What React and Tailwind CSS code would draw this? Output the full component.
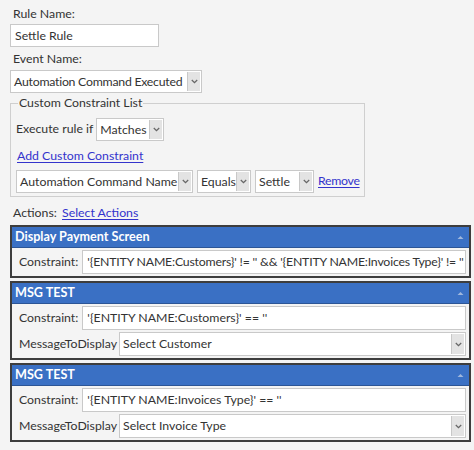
import React from "react";

const Arrow = () => (
  <span className="flex items-center justify-center w-[13px] self-stretch my-[1px] mr-[1px] bg-[#e3e3e3] border-l border-[#c8c8c8]">
    <svg width="7" height="5" viewBox="0 0 7 5"><path d="M0.8 1 L3.5 3.6 L6.2 1" fill="none" stroke="#666" strokeWidth="1.3" /></svg>
  </span>
);

const Select = ({ value, className = "", textClass = "" }) => (
  <div className={"flex items-stretch h-[23px] bg-white border border-[#c9c9c9] " + className}>
    <span className={"flex-1 pl-[3px] leading-[21px] whitespace-nowrap overflow-hidden " + textClass}>{value}</span>
    <Arrow />
  </div>
);

const Up = () => (
  <svg width="7" height="5" viewBox="0 0 7 5"><path d="M0.5 4 L3.5 1 L6.5 4 Z" fill="#9fb7dd" /></svg>
);

const Panel = ({ title, children }) => (
  <div className="border-2 border-[#3d3d3d] bg-[#f4f4f4]">
    <div className="flex items-center justify-between h-[21px] bg-[#3a70c4] border-b border-[#2c5596] px-[3px] pr-[5px]">
      <span className="text-white font-bold text-[12.6px]">{title}</span>
      <Up />
    </div>
    <div className="px-[3px] py-[2px] flex flex-col gap-[2px]">{children}</div>
  </div>
);

export default function App() {
  return (
    <div className="w-[474px] h-[450px] bg-[#f4f4f4] text-[#333] text-[12.3px] overflow-hidden" style={{ fontFamily: 'Lato, "Noto Sans", sans-serif' }}>
      <div className="pl-[10px] pr-[3px] pt-[4px]">
        <div className="pl-[3px] h-[20px] leading-[20px]">Rule Name:</div>
        <div className="w-[149px] h-[23px] bg-white border border-[#c9c9c9] pl-[4px] leading-[21px]">Settle Rule</div>
        <div className="pl-[3px] h-[23px] leading-[24px]">Event Name:</div>
        <Select value="Automation Command Executed" className="w-[192px]" textClass="tracking-[-0.25px]" />
        <fieldset className="mt-[3px] w-[355px] min-w-0 border border-[#cfcfcf] pl-[5px] pr-0 pb-[3px] pt-0">
          <legend className="px-[1px] ml-[2px] leading-[14px]">Custom Constraint List</legend>
          <div className="flex items-center gap-[3px] mt-[8px]">
            <span>Execute rule if</span>
            <Select value="Matches" className="w-[68px]" />
          </div>
          <div className="mt-[5px] h-[20px] leading-[20px] pl-[1px]">
            <a className="text-[#3333cc] underline underline-offset-2">Add Custom Constraint</a>
          </div>
          <div className="flex items-center gap-[4px] mt-[4px]">
            <Select value="Automation Command Name" className="w-[177px] shrink-0" />
            <Select value="Equals" className="w-[54px] shrink-0" />
            <Select value="Settle" className="w-[59px] shrink-0" />
            <a className="text-[#3333cc] underline underline-offset-2 tracking-[-0.3px] whitespace-nowrap">Remove</a>
          </div>
        </fieldset>
        <div className="pl-[3px] mt-[5px] h-[22px] leading-[22px]">
          Actions: <a className="text-[#3333cc] underline underline-offset-2 ml-[2px]">Select Actions</a>
        </div>
        <div className="flex flex-col gap-[3px] mt-[1px]">
          <Panel title="Display Payment Screen">
            <div className="flex items-center h-[24px] gap-[4px]">
              <span className="pl-[4px]">Constraint:</span>
              <div className="flex-1 h-[24px] bg-white border border-[#c9c9c9] pl-[4px] leading-[22px] whitespace-nowrap overflow-hidden tracking-[-0.2px]">'{"{"}ENTITY NAME:Customers{"}"}' != '' &amp;&amp; '{"{"}ENTITY NAME:Invoices Type{"}"}' != ''</div>
            </div>
          </Panel>
          <Panel title="MSG TEST">
            <div className="flex items-center h-[24px] gap-[4px]">
              <span className="pl-[4px]">Constraint:</span>
              <div className="flex-1 h-[24px] bg-white border border-[#c9c9c9] pl-[4px] leading-[22px]">'{"{"}ENTITY NAME:Customers{"}"}' == ''</div>
            </div>
            <div className="flex items-center h-[24px] gap-[2px]">
              <span className="pl-[4px]">MessageToDisplay</span>
              <Select value="Select Customer" className="flex-1 h-[24px]" />
            </div>
          </Panel>
          <Panel title="MSG TEST">
            <div className="flex items-center h-[24px] gap-[4px]">
              <span className="pl-[4px]">Constraint:</span>
              <div className="flex-1 h-[24px] bg-white border border-[#c9c9c9] pl-[4px] leading-[22px]">'{"{"}ENTITY NAME:Invoices Type{"}"}' == ''</div>
            </div>
            <div className="flex items-center h-[24px] gap-[2px]">
              <span className="pl-[4px]">MessageToDisplay</span>
              <Select value="Select Invoice Type" className="flex-1 h-[24px]" />
            </div>
          </Panel>
        </div>
      </div>
    </div>
  );
}
